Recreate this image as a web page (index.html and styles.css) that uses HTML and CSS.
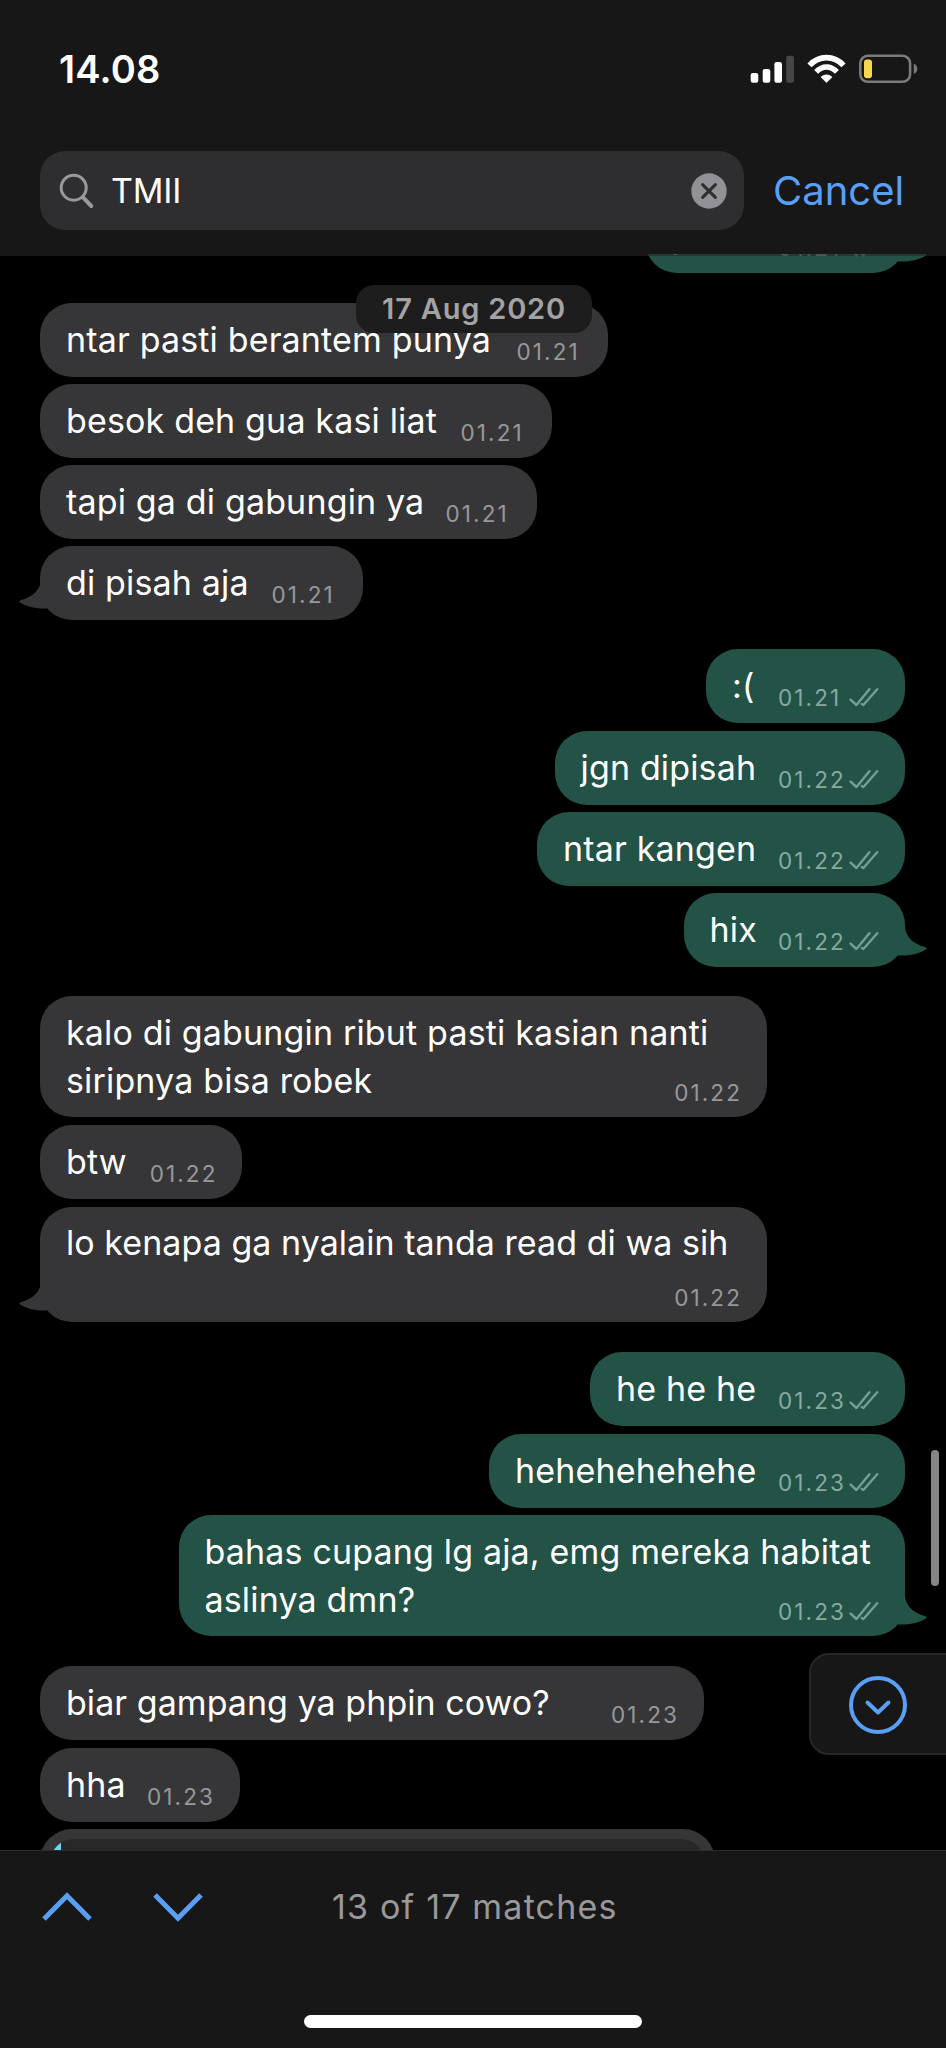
FILE: index.html
```
<!DOCTYPE html>
<html lang="id">
<head>
<meta charset="utf-8">
<title>Chat search</title>
<link rel="stylesheet" href="styles.css">
</head>
<body>
<svg class="defs" aria-hidden="true">
  <symbol id="ticks" viewBox="0 0 30 20"><path d="M1.6 12.6 7.4 18 20.4 2.2M12.8 17l1.6 1L28.2 2.2" fill="none" stroke="currentColor" stroke-width="2.4" stroke-linecap="round" stroke-linejoin="round"/></symbol>
  <symbol id="tail" viewBox="0 0 40 46"><path d="M0 14H18V15C18 25 26 33 38 36Q41.500 37.300 38 39C30 43.500 22 45 11 44.500L0 44Z" fill="currentColor"/></symbol>
</svg>
<div class="screen">
  <header class="header">
    <div class="status">
      <span class="clock">14.08</span>
      <svg class="status-icons" viewBox="0 0 170 32" width="170" height="32">
        <g fill="#fff">
          <rect x=".7" y="21" width="7.6" height="9.800" rx="2.200"/>
          <rect x="12.700" y="17" width="7.600" height="13.800" rx="2.200"/>
          <rect x="24.400" y="10" width="7.600" height="20.800" rx="2.200"/>
          <rect x="36.200" y="3.700" width="7.800" height="27.100" rx="2.200" fill="#464646"/>
          <path d="M76.500 30.600 70.900 25.100Q76.500 20.500 82.100 25.100Z" stroke="#fff" stroke-width=".6" stroke-linejoin="round"/>
        </g>
        <g fill="none" stroke="#fff" stroke-width="5.600">
          <path d="M59.500 13.300C69 3 84 3 93.500 13.300"/>
          <path d="M66.100 19.900C72.500 13.400 80.500 13.400 86.900 19.900"/>
        </g>
        <rect x="110.300" y="3.800" width="49.800" height="26" rx="7.500" fill="none" stroke="#7b7b7b" stroke-width="2.500"/>
        <rect x="114" y="7.600" width="8" height="18.600" rx="3" fill="#f8d748"/>
        <path d="M163.800 11.600C168.400 13.500 168.400 20.500 163.800 22Z" fill="#7b7b7b"/>
      </svg>
    </div>
    <div class="search-row">
      <div class="search">
        <svg class="glass" viewBox="0 0 36 36" width="36" height="36"><circle cx="14.700" cy="14.700" r="12.500"/><path d="M24 24.300 32.300 33" stroke-width="4"/></svg>
        <span class="query">TMII</span>
        <svg class="clear" viewBox="0 0 36 36" width="36" height="36"><circle cx="18" cy="18" r="17.700" fill="#919196"/><path d="M11.600 11.600 24.400 24.400M24.400 11.600 11.600 24.400"/></svg>
      </div>
      <span class="cancel">Cancel</span>
    </div>
  </header>

  <main class="chat">
    <section class="group out clipped">
      <div class="bubble w-260"><span>p</span><span class="time">01.21<svg class="ticks"><use href="#ticks"/></svg></span><svg class="tail"><use href="#tail"/></svg></div>
    </section>

    <section class="group tight">
      <div class="bubble w-568"><span>ntar pasti berantem punya</span><span class="time">01.21</span></div>
      <div class="bubble w-512"><span>besok deh gua kasi liat</span><span class="time">01.21</span></div>
      <div class="bubble w-497"><span>tapi ga di gabungin ya</span><span class="time">01.21</span></div>
      <div class="bubble w-323"><span>di pisah aja</span><span class="time">01.21</span><svg class="tail"><use href="#tail"/></svg></div>
    </section>

    <section class="group out tight">
      <div class="bubble w-199"><span>:(</span><span class="time">01.21<svg class="ticks"><use href="#ticks"/></svg></span></div>
      <div class="bubble w-351"><span>jgn dipisah</span><span class="time">01.22<svg class="ticks"><use href="#ticks"/></svg></span></div>
      <div class="bubble w-368"><span>ntar kangen</span><span class="time">01.22<svg class="ticks"><use href="#ticks"/></svg></span></div>
      <div class="bubble w-222"><span>hix</span><span class="time">01.22<svg class="ticks"><use href="#ticks"/></svg></span><svg class="tail"><use href="#tail"/></svg></div>
    </section>

    <section class="group">
      <div class="bubble multi w-727"><span>kalo di gabungin ribut pasti kasian nanti</span><div class="last"><span>siripnya bisa robek</span><span class="time">01.22</span></div></div>
      <div class="bubble w-202"><span>btw</span><span class="time">01.22</span></div>
      <div class="bubble multi snug w-727"><span>lo kenapa ga nyalain tanda read di wa sih</span><div class="last time-only"><span class="time">01.22</span></div><svg class="tail"><use href="#tail"/></svg></div>
    </section>

    <section class="group out">
      <div class="bubble w-315"><span>he he he</span><span class="time">01.23<svg class="ticks"><use href="#ticks"/></svg></span></div>
      <div class="bubble w-416"><span>hehehehehehe</span><span class="time">01.23<svg class="ticks"><use href="#ticks"/></svg></span></div>
      <div class="bubble multi w-727"><span>bahas cupang lg aja, emg mereka habitat</span><div class="last"><span>aslinya dmn?</span><span class="time">01.23<svg class="ticks"><use href="#ticks"/></svg></span></div><svg class="tail"><use href="#tail"/></svg></div>
    </section>

    <section class="group">
      <div class="bubble snug w-663"><span>biar gampang ya phpin cowo?</span><span class="time">01.23</span></div>
      <div class="bubble w-200"><span>hha</span><span class="time">01.23</span></div>
      <div class="bubble reply"><div class="quote"></div></div>
    </section>

    <div class="date">17 Aug 2020</div>
    <div class="scrollbar"></div>
    <div class="to-bottom">
      <svg viewBox="0 0 58 58" width="58" height="58"><circle cx="29" cy="29" r="27"/><path d="M18.500 26.500 29 36.500 39.500 26.500" stroke-linecap="round" stroke-linejoin="round"/></svg>
    </div>
  </main>

  <footer class="footer">
    <div class="nav">
      <svg viewBox="0 0 50 30" width="50" height="30"><path d="M2 27 25 3.800 48 27"/></svg>
      <svg viewBox="0 0 50 30" width="50" height="30"><path d="M2 3 25 26.200 48 3"/></svg>
      <span class="matches">13 of 17 matches</span>
    </div>
    <div class="home"></div>
  </footer>
</div>
</body>
</html>
```
FILE: styles.css
```
* { box-sizing: border-box; }
body {
  margin: 0;
  background: #000;
  font-family: "Inter", "Liberation Sans", sans-serif;
  color: #fff;
}
svg { display: block; flex: none; }
.defs { position: absolute; width: 0; height: 0; }
.screen {
  width: 946px;
  height: 2048px;
  display: flex;
  flex-direction: column;
  overflow: hidden;
}

/* header: its last pixels let the chat show through */
.header {
  position: relative;
  z-index: 1;
  height: 256px;
  flex: none;
  background: linear-gradient(#171717 254px, rgba(38, 38, 38, .6) 254px);
}
.status {
  height: 151px;
  padding: 52px 26px 0 59px;
  display: flex;
  justify-content: space-between;
  align-items: flex-start;
}
.clock {
  font-size: 38px;
  line-height: 34px;
  font-weight: 600;
  letter-spacing: .2px;
}
.search-row {
  display: flex;
  align-items: center;
  padding-left: 40px;
  gap: 29px;
}
.search {
  width: 704px;
  height: 79px;
  padding: 0 17px 0 19px;
  border-radius: 25px;
  background: #2e2e30;
  display: flex;
  align-items: center;
}
.glass { fill: none; stroke: #98989e; stroke-width: 3; stroke-linecap: round; }
.glass path { stroke-width: 4; }
.query {
  flex: 1;
  margin-left: 16px;
  font-size: 34px;
  letter-spacing: -.2px;
}
.clear { stroke: #2e2e30; stroke-width: 3; stroke-linecap: round; }
.clear circle { stroke: none; }
.cancel { font-size: 40px; line-height: 48px; letter-spacing: 0; color: #5a9ff6; }

/* conversation */
.chat {
  position: relative;
  height: 1597px;
  margin-top: -3px;
  padding-top: 3px;
  flex: none;
  overflow: hidden;
}
.group {
  --bubble: #363638;
  --meta: #98989b;
  display: flex;
  flex-direction: column;
  align-items: flex-start;
  gap: 7.700px;
  padding: 0 41px 0 40px;
  margin-bottom: 29.700px;
}
.group.out {
  --bubble: #235247;
  --meta: #87aaa1;
  align-items: flex-end;
}
.group.tight { gap: 7.200px; margin-bottom: 29.400px; }
.group.clipped { margin-top: -57px; margin-bottom: 29.500px; }
.bubble {
  position: relative;
  min-height: 74px;
  padding: 13px 24.500px 13px 26px;
  border-radius: 32px;
  background: var(--bubble);
  display: flex;
  justify-content: space-between;
  align-items: flex-end;
  font-size: 34px;
  line-height: 48px;
  letter-spacing: .16px;
  white-space: nowrap;
}
.out .bubble { padding-right: 25px; }
.bubble.snug { letter-spacing: .05px; }
.bubble.multi {
  flex-direction: column;
  align-items: stretch;
  padding-top: 12.500px;
  padding-bottom: 12.500px;
}
.last {
  display: flex;
  justify-content: space-between;
  align-items: flex-end;
}
.time-only { height: 42.500px; justify-content: flex-end; }
.time {
  display: flex;
  align-items: flex-end;
  min-width: 67px;
  font-size: 22.500px;
  line-height: 24px;
  letter-spacing: 2.1px;
  color: var(--meta);
}
.out .time { min-width: 102px; }
.ticks { width: 30px; height: 20px; margin: 0 1px 3px auto; color: #739f94; }
.tail {
  position: absolute;
  bottom: 10px;
  left: -21px;
  width: 40px;
  height: 46px;
  color: var(--bubble);
  transform: scaleX(-1);
}
.out .tail { left: auto; right: -22px; transform: none; }

.w-199 { width: 199px; }
.w-200 { width: 199.500px; }
.w-202 { width: 202px; }
.w-222 { width: 221.500px; }
.w-260 { width: 260px; }
.w-315 { width: 315px; }
.w-323 { width: 323px; }
.w-351 { width: 350.500px; }
.w-368 { width: 368px; }
.w-416 { width: 416px; }
.w-497 { width: 497px; }
.w-512 { width: 512px; }
.w-568 { width: 568px; }
.w-663 { width: 663.500px; }
.w-727 { width: 726.500px; }

.reply { width: 675px; height: 120px; padding: 10px; }
.quote {
  flex: 1;
  height: 90px;
  align-self: flex-start;
  border-radius: 24px;
  background: linear-gradient(to right, #70d6ee 11px, #28282a 11px);
}

/* overlays */
.date {
  position: absolute;
  left: 356px;
  top: 32px;
  width: 236px;
  height: 48px;
  border-radius: 18px;
  background: #1d1d1e;
  color: #a3a3a5;
  font-size: 29px;
  line-height: 48px;
  font-weight: 600;
  letter-spacing: .8px;
  text-align: center;
}
.scrollbar {
  position: absolute;
  right: 7.500px;
  top: 1197px;
  width: 7.500px;
  height: 136px;
  border-radius: 4px;
  background: #858585;
}
.to-bottom {
  position: absolute;
  right: -2px;
  top: 1400px;
  width: 139.500px;
  height: 102px;
  padding: 21px 0 0 38px;
  border: 2px solid #272728;
  border-radius: 20px 0 0 20px;
  background: #171717;
}
.to-bottom svg { fill: none; stroke: #5a9ff6; stroke-width: 4; }

/* footer */
.footer {
  flex: 1;
  background: #171717;
  border-top: 1px solid #2b2b2c;
  display: flex;
  flex-direction: column;
  align-items: center;
}
.nav {
  width: 100%;
  height: 164px;
  padding: 41px 0 0 42px;
  display: flex;
  align-items: flex-start;
  gap: 61px;
}
.nav svg { fill: none; stroke: #5a9ff6; stroke-width: 5; }
.matches {
  margin-left: 68px;
  margin-top: -9px;
  font-size: 34px;
  line-height: 48px;
  letter-spacing: 1.200px;
  color: #99999b;
}
.home { width: 338px; height: 13px; border-radius: 7px; background: #fff; }
```
